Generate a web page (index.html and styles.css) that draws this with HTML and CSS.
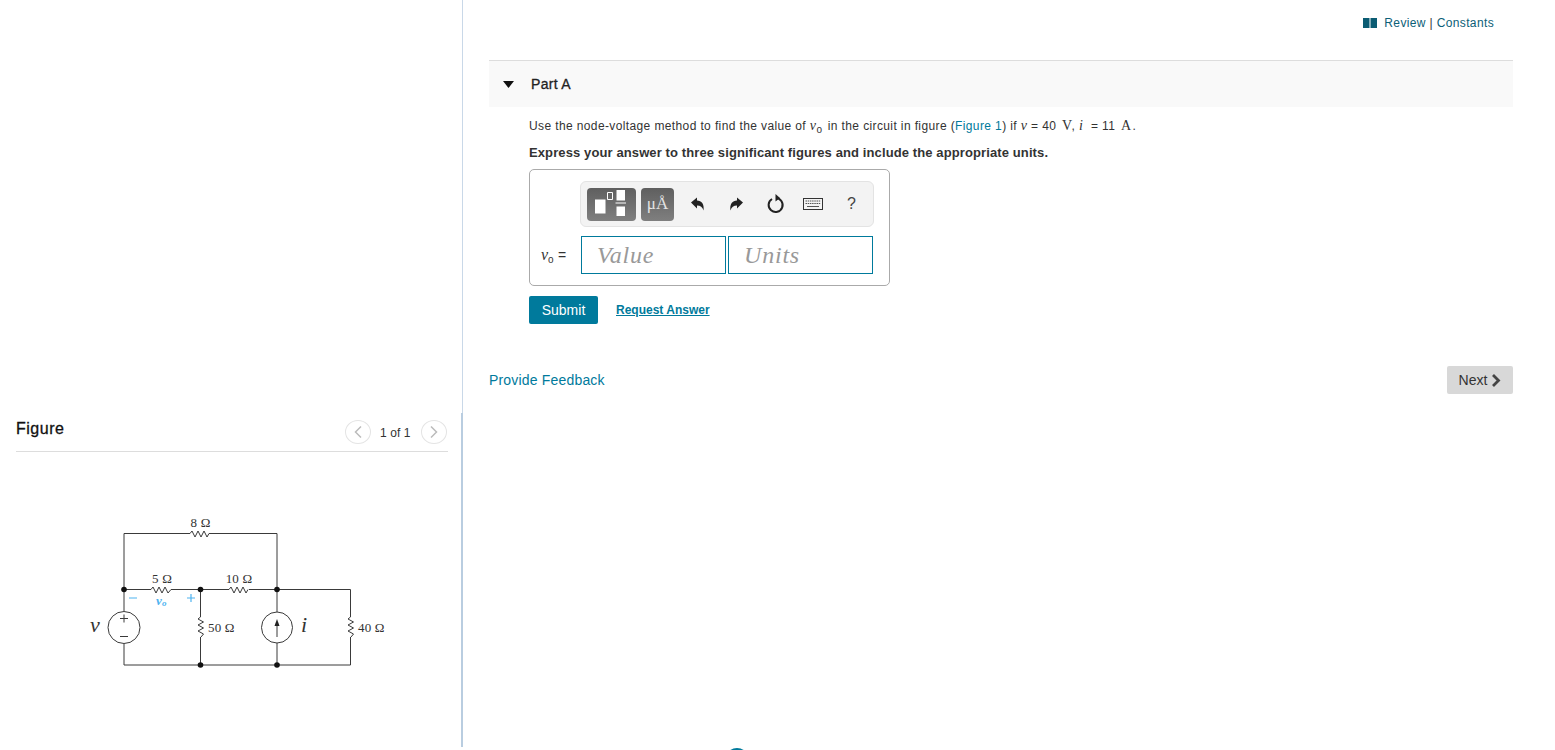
FILE: index.html
```html
<!DOCTYPE html>
<html lang="en">
<head>
<meta charset="utf-8">
<title>Part A</title>
<link rel="stylesheet" href="styles.css">
</head>
<body>
<div class="page">
  <aside class="left">
    <div class="left-top"></div>
    <section class="figure-pane">
      <header class="figure-head">
        <h2 class="figure-title">Figure</h2>
        <div class="pager">
          <span class="pager-btn"><svg width="10" height="14" viewBox="0 0 10 14"><path d="M8 1.500 2.500 7 8 12.500" fill="none" stroke="#bbb" stroke-width="1.500"/></svg></span>
          <span class="pager-text">1 of 1</span>
          <span class="pager-btn"><svg width="10" height="14" viewBox="0 0 10 14"><path d="M2 1.500 7.500 7 2 12.500" fill="none" stroke="#bbb" stroke-width="1.500"/></svg></span>
        </div>
      </header>
      <svg class="circuit" width="320" height="180" viewBox="80 500 320 180">
        <g fill="none" stroke="#3a3a3a" stroke-width="1">
          <path d="M124 611V533.500H190M211 533.500H277V612M124 589.500H151M173 589.500H229M249 589.500H350.500V617M350.500 637V665H124V644M200.500 589.500V617M200.500 637V665M277 643V665"/>
          <path d="M190 533.500l2-2.500 3 6 3-6 3 6 3-6 3 6 2-3.500 2 0"/>
          <path d="M151 589.500l2-2.500 3 6 3-6 3 6 3-6 3 6 3-3.500 2 0"/>
          <path d="M229 589.500l2-2.500 3 6 3-6 3 6 3-6 3 6 2-3.500"/>
          <path d="M200.500 617l-2.500 2 5.500 3-5.500 3 5.500 3-5.500 3 5.500 3-2.500 3"/>
          <path d="M350.500 617l-2.500 2 5.500 3-5.500 3 5.500 3-5.500 3 5.500 3-2.500 3"/>
          <circle cx="124" cy="627.500" r="16"/>
          <circle cx="277" cy="627.500" r="15.500"/>
          <path d="M277 637V623"/>
          <path d="M120 618.500h8M124 614.500v8M120 636.500h8"/>
        </g>
        <path d="M277 619l-2.500 7h5z" fill="#222"/>
        <g fill="#111">
          <circle cx="124" cy="589.500" r="2.800"/>
          <circle cx="200.500" cy="589.500" r="2.800"/>
          <circle cx="277" cy="589.500" r="2.800"/>
          <circle cx="200.500" cy="665" r="2.800"/>
          <circle cx="277" cy="665" r="2.800"/>
        </g>
        <g class="c-label">
          <text x="200.500" y="527" text-anchor="middle">8 Ω</text>
          <text x="162" y="583" text-anchor="middle">5 Ω</text>
          <text x="239" y="583" text-anchor="middle">10 Ω</text>
          <text x="208" y="632">50 Ω</text>
          <text x="358" y="632">40 Ω</text>
        </g>
        <text class="c-var" x="90" y="632">v</text>
        <text class="c-var" x="301" y="632">i</text>
        <g class="c-blue">
          <text x="156" y="605">v</text>
          <text class="c-sub" x="162" y="606">o</text>
        </g>
        <path d="M129 598h8M187 598h8M191 594v8" stroke="#4fb3f0" stroke-width="1.200" fill="none"/>
      </svg>
    </section>
  </aside>
  <main class="right">
    <div class="review">
      <svg class="book" width="14" height="10" viewBox="0 0 14 10"><path d="M0 0h6.500v10H0zM7.500 0H14v10H7.500z" fill="#0b5c73"/></svg>
      <a class="review-link">Review</a><span class="review-sep"> | </span><a class="review-link">Constants</a>
    </div>
    <div class="part-head">
      <svg class="caret" width="11" height="7" viewBox="0 0 11 7"><path d="M0 0h11L5.500 7z" fill="#111"/></svg>
      <span class="part-title">Part A</span>
    </div>
    <div class="part-body">
      <p class="question">Use the node-voltage method to find the value of <i class="m">v</i><sub class="m-sub m-sub-tight">o</sub>  in the circuit in figure (<a class="inline-link">Figure 1</a>) if <i class="m">v</i> = 40 <span class="m-up m-up-v">V</span>, <i class="m m-i">i</i> = 11 <span class="m-up m-up-a">A</span>.</p>
      <p class="instruction">Express your answer to three significant figures and include the appropriate units.</p>
      <div class="answer">
        <div class="toolbar">
          <span class="tool-btn tool-btn-wide">
            <svg width="34" height="28" viewBox="0 0 34 28"><path d="M0 9.500h10.500v14H0zM21.500 0h8.500v10.500h-8.500zM21.500 16.500h8.500v9.500h-8.500zM20.500 12.500h10.500v1H20.500z" fill="#fff"/><path d="M12.500 2.500h5v7h-5z" fill="none" stroke="#fff"/></svg>
          </span>
          <span class="tool-btn tool-btn-unit">μÅ</span>
          <span class="tool-icons">
            <svg class="tool-icon" width="16" height="16" viewBox="0 0 16 16"><path d="M1 6.500 7 1.500V4.500C11.500 4.500 14.500 8 13.500 14.500 12.500 11 10.500 9.500 7 9.500V12.500Z" fill="#222"/></svg>
            <svg class="tool-icon" width="16" height="16" viewBox="0 0 16 16"><path d="M15 6.500 9 1.500V4.500C4.500 4.500 1.500 8 2.500 14.500 3.500 11 5.500 9.500 9 9.500V12.500Z" fill="#222"/></svg>
            <svg class="tool-icon" width="18" height="20" viewBox="0 0 18 20"><path d="M5 5A7 7 0 1 0 9 4" fill="none" stroke="#222" stroke-width="2"/><path d="M8.500 0 13 4 8.500 7.500Z" fill="#222"/></svg>
            <svg class="tool-icon" width="20" height="12" viewBox="0 0 20 12"><rect x=".5" y=".5" width="19" height="11" fill="#f3f3f3" stroke="#333"/><path d="M2.500 3h15M2.500 5.500h15" stroke="#555" stroke-dasharray="1.500 .7"/><path d="M4 8.500h12" stroke="#555"/></svg>
            <span class="tool-help">?</span>
          </span>
        </div>
        <div class="answer-row">
          <span class="answer-label"><i class="m m-large">v</i><sub class="m-sub">o</sub> <span class="answer-eq">=</span></span>
          <span class="answer-input">Value</span>
          <span class="answer-input">Units</span>
        </div>
      </div>
      <div class="actions">
        <button class="submit" type="button">Submit</button>
        <a class="request">Request Answer</a>
      </div>
    </div>
    <div class="footer-row">
      <a class="feedback">Provide Feedback</a>
      <span class="next">Next <svg width="10" height="13" viewBox="0 0 10 13"><path d="M2 1 7.500 6.500 2 12" fill="none" stroke="#444" stroke-width="2.800"/></svg></span>
    </div>
  </main>
  <span class="blip"></span>
</div>
</body>
</html>
```
FILE: styles.css
```css
* { box-sizing: border-box; }
html, body { margin: 0; padding: 0; background: #fff; }
body { font-family: "Liberation Sans", Arial, sans-serif; color: #333; }
.page { position: relative; display: flex; width: 1555px; height: 750px; overflow: hidden; }

.left { width: 464px; flex: none; display: flex; flex-direction: column; }
.left-top { height: 413px; width: 463px; border-right: 1px solid #c9d8e8; }
.figure-pane { width: 463px; height: 334px; border-right: 2px solid #b9cde0; }
.figure-head { display: flex; justify-content: space-between; align-items: center; height: 39px; margin: 0 13px 0 16px; border-bottom: 1px solid #ddd; }
.figure-title { margin: 0 0 6px; font-size: 16px; letter-spacing: .5px; font-weight: normal; color: #111; -webkit-text-stroke: .3px #111; }
.pager { display: flex; align-items: center; gap: 9px; margin-right: 1px; }
.pager-btn { display: flex; align-items: center; justify-content: center; width: 26px; height: 24px; border: 1px solid #e4e4e4; border-radius: 50%; }
.pager-text { width: 32px; padding-top: 2px; font-size: 12px; letter-spacing: .1px; color: #333; }
.circuit { display: block; margin: 48px 0 0 80px; }
.c-label text { font-family: "Liberation Serif", serif; font-size: 13px; letter-spacing: .2px; fill: #333; }
.c-var { font-family: "Liberation Serif", serif; font-style: italic; font-size: 22px; fill: #333; }
.c-blue text { font-family: "Liberation Serif", serif; font-style: italic; font-weight: bold; font-size: 13px; fill: #4fb3f0; }
.c-blue .c-sub { font-size: 9px; }

.right { flex: none; width: 1024px; margin-left: 25px; display: flex; flex-direction: column; }
.review { display: flex; justify-content: flex-end; align-items: center; height: 60px; padding: 0 19px 15px 0; font-size: 12px; letter-spacing: .36px; white-space: pre; }
.book { margin-right: 7px; }
.review-link { color: #0b6078; }
.review-sep { color: #333; }
.part-head { display: flex; align-items: center; height: 47px; background: #f9f9f9; border-top: 1px solid #ddd; padding-left: 14px; }
.caret { margin-right: 17px; }
.part-title { font-size: 14px; letter-spacing: .3px; font-weight: normal; color: #222; -webkit-text-stroke: .3px #222; }
.part-body { padding: 10px 0 0 40px; }
.question { margin: 0; height: 17px; font-size: 12px; line-height: 17px; letter-spacing: .38px; color: #333; white-space: pre; }
.instruction { margin: 10px 0 0; height: 17px; font-size: 13px; line-height: 17px; letter-spacing: .11px; font-weight: bold; color: #333; white-space: pre; }
.m { font-family: "Liberation Serif", serif; font-style: italic; font-size: 14px; }
.m-large { font-size: 16px; }
.m-i { margin-right: 4px; }
.m-sub { font-size: 10px; line-height: 0; }
.m-sub-tight { margin-right: -2px; }
.m-up { font-family: "Liberation Serif", serif; font-size: 14px; letter-spacing: 1.400px; }
.m-up-v { margin-left: 2px; margin-right: -2px; }
.m-up-a { margin-left: 2px; }
.inline-link { color: #007a9c; }

.answer { width: 361px; height: 117px; margin-top: 8px; padding: 11px 15px 0 10px; border: 1px solid #aaa; border-radius: 5px; }
.toolbar { display: flex; align-items: center; width: 294px; height: 46px; margin-left: 40px; padding-left: 6px; background: #f3f3f3; border: 1px solid #e3e3e3; border-radius: 6px; }
.tool-btn { display: flex; align-items: center; justify-content: center; height: 33px; border-radius: 4px; background: linear-gradient(#5f5f5f, #7f7f7f); color: #e4e4e4; }
.tool-btn-wide { width: 49px; margin-right: 5px; }
.tool-btn-unit { width: 33px; font-family: "Liberation Serif", serif; font-size: 17px; }
.tool-icons { display: flex; align-items: center; margin-left: 16px; }
.tool-icon:nth-child(1) { margin-right: 22px; }
.tool-icon:nth-child(2) { margin-right: 23px; }
.tool-icon:nth-child(3) { margin-right: 18px; }
.tool-icon:nth-child(4) { margin-right: 24px; }
.tool-help { font-size: 16px; color: #444; }
.answer-row { display: flex; align-items: center; gap: 2px; margin-top: 9px; }
.answer-label { width: 39px; padding-left: 1px; font-size: 12px; color: #333; white-space: pre; }
.answer-eq { margin-left: 1px; font-size: 14px; }
.answer-input { display: flex; align-items: center; width: 145px; height: 38px; padding-left: 15px; border: 1px solid #007a9c; font-family: "Liberation Serif", serif; font-style: italic; font-size: 24px; letter-spacing: .8px; color: #999; }

.actions { display: flex; align-items: center; margin-top: 10px; }
.submit { width: 69px; height: 28px; padding: 0; background: #007a9c; border: 0; border-radius: 2px; color: #fff; font: 14px "Liberation Sans", Arial, sans-serif; }
.request { margin-left: 18px; font-size: 12px; font-weight: bold; color: #007a9c; text-decoration: underline; }

.footer-row { display: flex; justify-content: space-between; align-items: center; margin-top: 42px; }
.feedback { font-size: 14px; letter-spacing: .18px; color: #007a9c; }
.next { display: flex; align-items: center; gap: 4px; justify-content: center; width: 66px; height: 28px; background: #d8d8d8; border-radius: 2px; font-size: 14px; color: #333; }

.blip { position: absolute; left: 725px; top: 748px; width: 24px; height: 24px; border-radius: 50%; background: #007a9c; }
```
